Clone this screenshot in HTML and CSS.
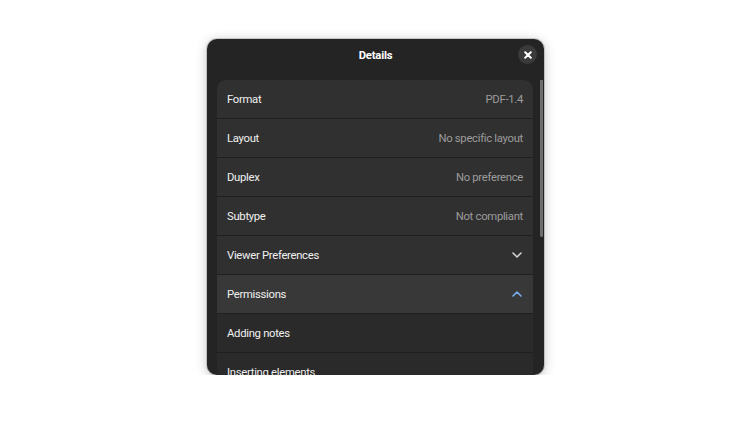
FILE: index.html
```html
<!DOCTYPE html>
<html lang="en">
<head>
  <meta charset="UTF-8">
  <title>Details</title>
  <link rel="stylesheet" href="styles.css">
</head>
<body>

<!-- Details dialog -->
<div class="dialog">
  <div class="header">
    <span class="title">Details</span>
    <button class="close" aria-label="Close">
      <svg width="8" height="8" viewBox="0 0 8 8">
        <path d="M1.2 1.2 L6.8 6.8 M6.8 1.2 L1.2 6.8" stroke="#fff" stroke-width="2" stroke-linecap="round"/>
      </svg>
    </button>
  </div>

  <div class="scroll">
    <div class="list">
      <div class="row"><span class="label">Format</span><span class="value">PDF-1.4</span></div>
      <div class="row"><span class="label">Layout</span><span class="value">No specific layout</span></div>
      <div class="row"><span class="label">Duplex</span><span class="value">No preference</span></div>
      <div class="row"><span class="label">Subtype</span><span class="value">Not compliant</span></div>
      <div class="row">
        <span class="label">Viewer Preferences</span>
        <svg class="chevron" width="10" height="6" viewBox="0 0 10 6">
          <path d="M1 1 L5 5 L9 1" fill="none" stroke="#d0d0d0" stroke-width="1.6" stroke-linecap="round" stroke-linejoin="round"/>
        </svg>
      </div>
      <div class="row expanded">
        <span class="label">Permissions</span>
        <svg class="chevron" width="10" height="6" viewBox="0 0 10 6">
          <path d="M1 5 L5 1 L9 5" fill="none" stroke="#78aeed" stroke-width="1.6" stroke-linecap="round" stroke-linejoin="round"/>
        </svg>
      </div>
      <div class="row sub"><span class="label">Adding notes</span></div>
      <div class="row sub"><span class="label">Inserting elements</span></div>
    </div>
    <div class="scrollbar"></div>
  </div>
</div>

</body>
</html>
```

FILE: styles.css
```css
body {
  margin: 0;
  padding-right: 1px;
  background: #ffffff;
  font-family: Roboto, 'Noto Sans', sans-serif;
  font-size: 11.3px;
  letter-spacing: -0.3px;
}

.dialog {
  width: 337px;
  height: 336px;
  margin: 39px auto 0;
  background: #242424;
  border-radius: 10px;
  box-shadow: 0 2px 12px rgba(0,0,0,0.25), 0 0 0 1px rgba(0,0,0,0.15);
  display: flex;
  flex-direction: column;
  overflow: hidden;
}

.header {
  height: 41px;
  flex-shrink: 0;
  display: flex;
  align-items: center;
  justify-content: center;
  position: relative;
}

.title {
  color: #ffffff;
  font-weight: bold;
  letter-spacing: -0.2px;
  margin-top: -8px;
}

.close {
  position: absolute;
  right: 7px;
  top: 6px;
  width: 19px;
  height: 19px;
  border: none;
  border-radius: 50%;
  background: #3a3a3a;
  padding: 0;
  display: flex;
  align-items: center;
  justify-content: center;
}

.scroll {
  flex: 1;
  overflow: hidden;
  position: relative;
}

.list {
  margin: 0 11px 0 10px;
  background: #303030;
  border-radius: 9px 9px 0 0;
  overflow: hidden;
}

.row {
  height: 38px;
  border-bottom: 1px solid #1f1f1f;
  padding: 0 10px;
  display: flex;
  align-items: center;
  justify-content: space-between;
}

.label {
  color: #f0f0f0;
  padding-top: 1px;
}

.value {
  color: #9c9c9c;
  padding-top: 1px;
}

.chevron {
  margin-right: 1px;
}

.row.expanded {
  background: #383838;
}

.row.sub {
  background: #2a2a2a;
}

.scrollbar {
  position: absolute;
  right: 1px;
  top: -5px;
  width: 3px;
  height: 162px;
  border-radius: 2px;
  background: #6e6e6e;
}
```
